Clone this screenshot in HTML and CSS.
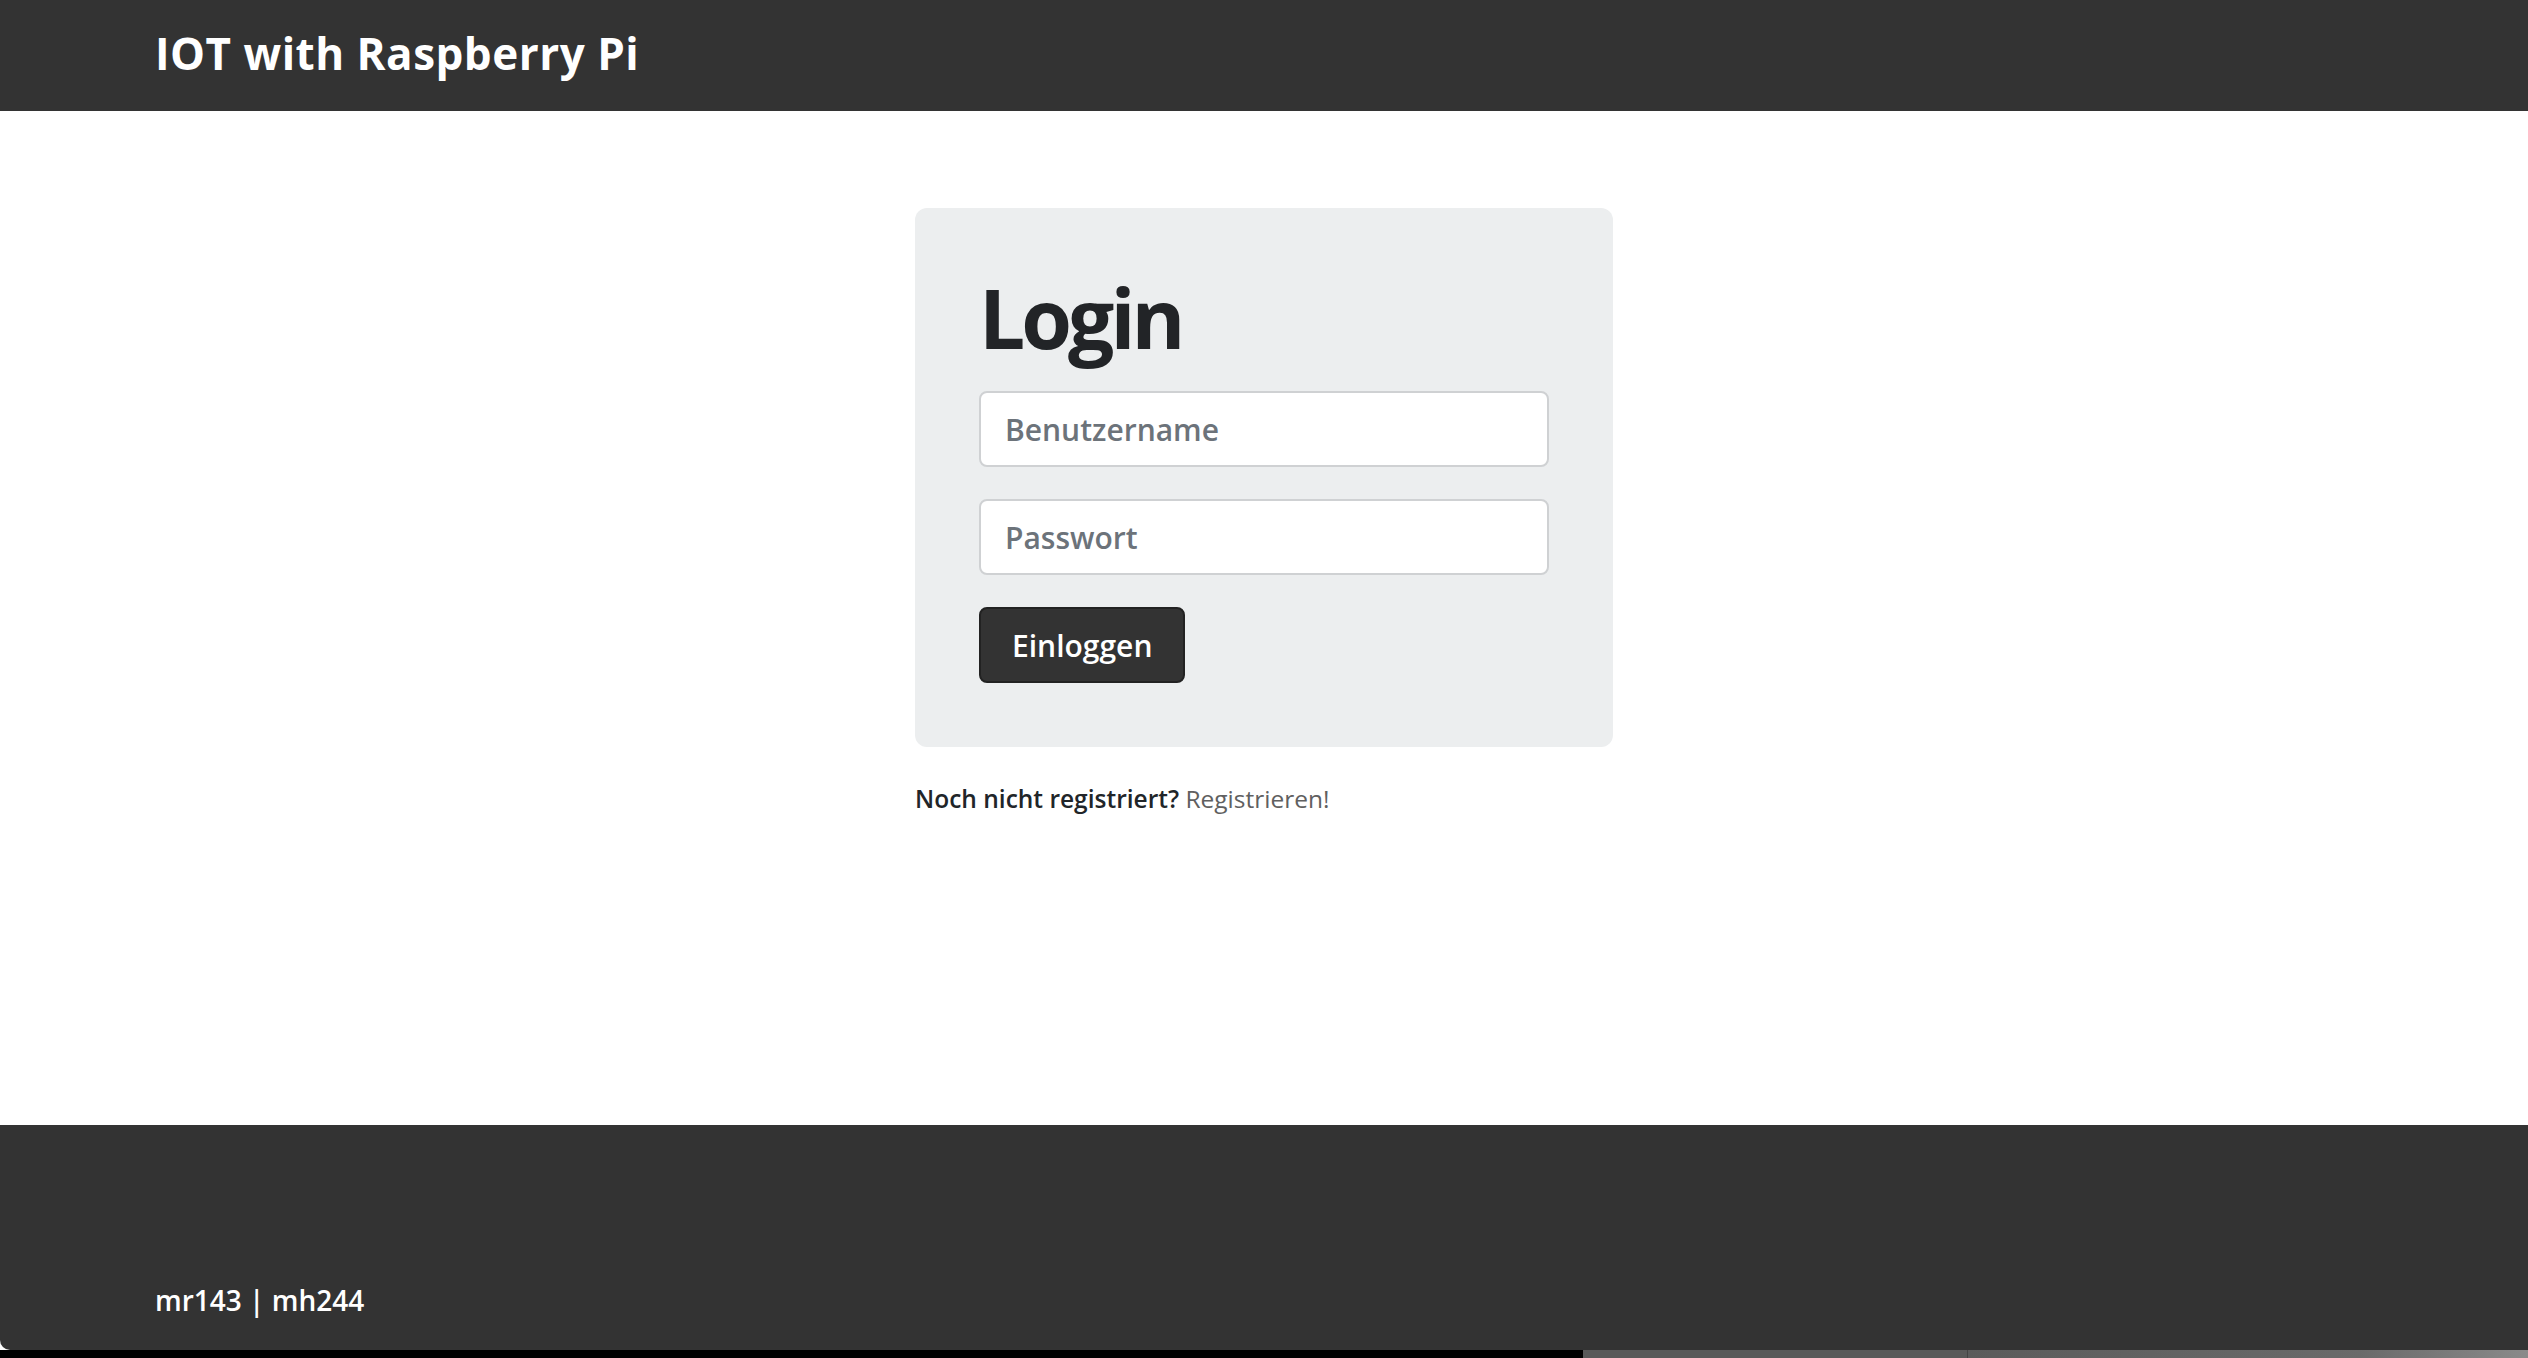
FILE: index.html
```html
<!DOCTYPE html>
<html lang="de">
<head>
<meta charset="utf-8">
<title>IOT with Raspberry Pi</title>
<link rel="stylesheet" href="styles.css">
</head>
<body>
<div class="page">
  <header class="topbar">
    <div class="container">
      <a class="brand" href="#">IOT with Raspberry Pi</a>
    </div>
  </header>
  <main class="main">
    <div class="login-wrap">
      <div class="card">
        <h1 class="card-title">Login</h1>
        <form class="form">
          <input class="field" type="text" placeholder="Benutzername">
          <input class="field" type="password" placeholder="Passwort">
          <button class="btn" type="button">Einloggen</button>
        </form>
      </div>
      <p class="register">Noch nicht registriert? <a class="register-link" href="#">Registrieren!</a></p>
    </div>
  </main>
  <footer class="footer">
    <div class="container">
      <span class="footer-text">mr143 | mh244</span>
    </div>
  </footer>
  <div class="strip">
    <div class="strip-dark"></div>
    <div class="strip-grey"></div>
    <div class="strip-light"></div>
  </div>
</div>
</body>
</html>
```

FILE: styles.css
```css
* { box-sizing: border-box; }
html, body { margin: 0; padding: 0; height: 100%; }
body {
  font-family: "Open Sans", "Noto Sans", sans-serif;
  color: #212529;
  background: #000;
}
.page {
  display: flex;
  flex-direction: column;
  height: 1358px;
  background: #fff;
}
.container {
  width: 100%;
  padding: 0 155px;
}
.topbar {
  height: 111px;
  background: #333333;
  display: flex;
  align-items: center;
  flex: none;
  padding-bottom: 5px;
}
.brand {
  color: #fff;
  text-decoration: none;
  font-weight: 700;
  font-size: 44px;
  letter-spacing: 0.5px;
}
.main {
  flex: 1;
  display: flex;
  justify-content: center;
  padding-top: 97px;
  background: #fff;
}
.login-wrap {
  width: 698px;
}
.card {
  background: #eceeef;
  border-radius: 12px;
  padding: 64px;
}
.card-title {
  margin: 0 0 29px 0;
  font-size: 82px;
  line-height: 1.1;
  font-weight: 700;
  color: #222427;
  letter-spacing: -4px;
}
.form {
  display: flex;
  flex-direction: column;
  align-items: flex-start;
  gap: 32px;
}
.field {
  width: 100%;
  height: 76px;
  border: 2px solid #cfd1d3;
  border-radius: 8px;
  background: #fff;
  padding: 0 24px;
  font-family: "Open Sans", "Noto Sans", sans-serif;
  font-size: 30px;
  font-weight: 600;
  color: #495057;
}
.field::placeholder {
  color: #6c737a;
  opacity: 1;
}
.btn {
  height: 76px;
  padding: 0 31px;
  background: #333333;
  border: 2px solid #222;
  border-radius: 8px;
  color: #fff;
  font-family: "Open Sans", "Noto Sans", sans-serif;
  font-size: 30px;
  font-weight: 600;
}
.register {
  margin: 35px 0 0 0;
  font-size: 24.5px;
  font-weight: 600;
  color: #212529;
}
.register-link {
  color: #606060;
  text-decoration: none;
  font-weight: 500;
}
.footer {
  flex: none;
  height: 225px;
  background: #333333;
  display: flex;
  align-items: flex-end;
  padding-bottom: 31px;
  border-bottom-left-radius: 10px;
}
.footer-text {
  color: #fff;
  font-size: 28px;
  font-weight: 600;
}
.strip {
  flex: none;
  height: 8px;
  display: flex;
  background: #000;
}
.strip-dark { width: 1583px; background: #000; }
.strip-grey { width: 385px; background: #595959; border-right: 1px solid #444; }
.strip-light { flex: 1; background: linear-gradient(to right, #5b5b5b, #6a6a6a 70%, #8a8a8a); }
```
